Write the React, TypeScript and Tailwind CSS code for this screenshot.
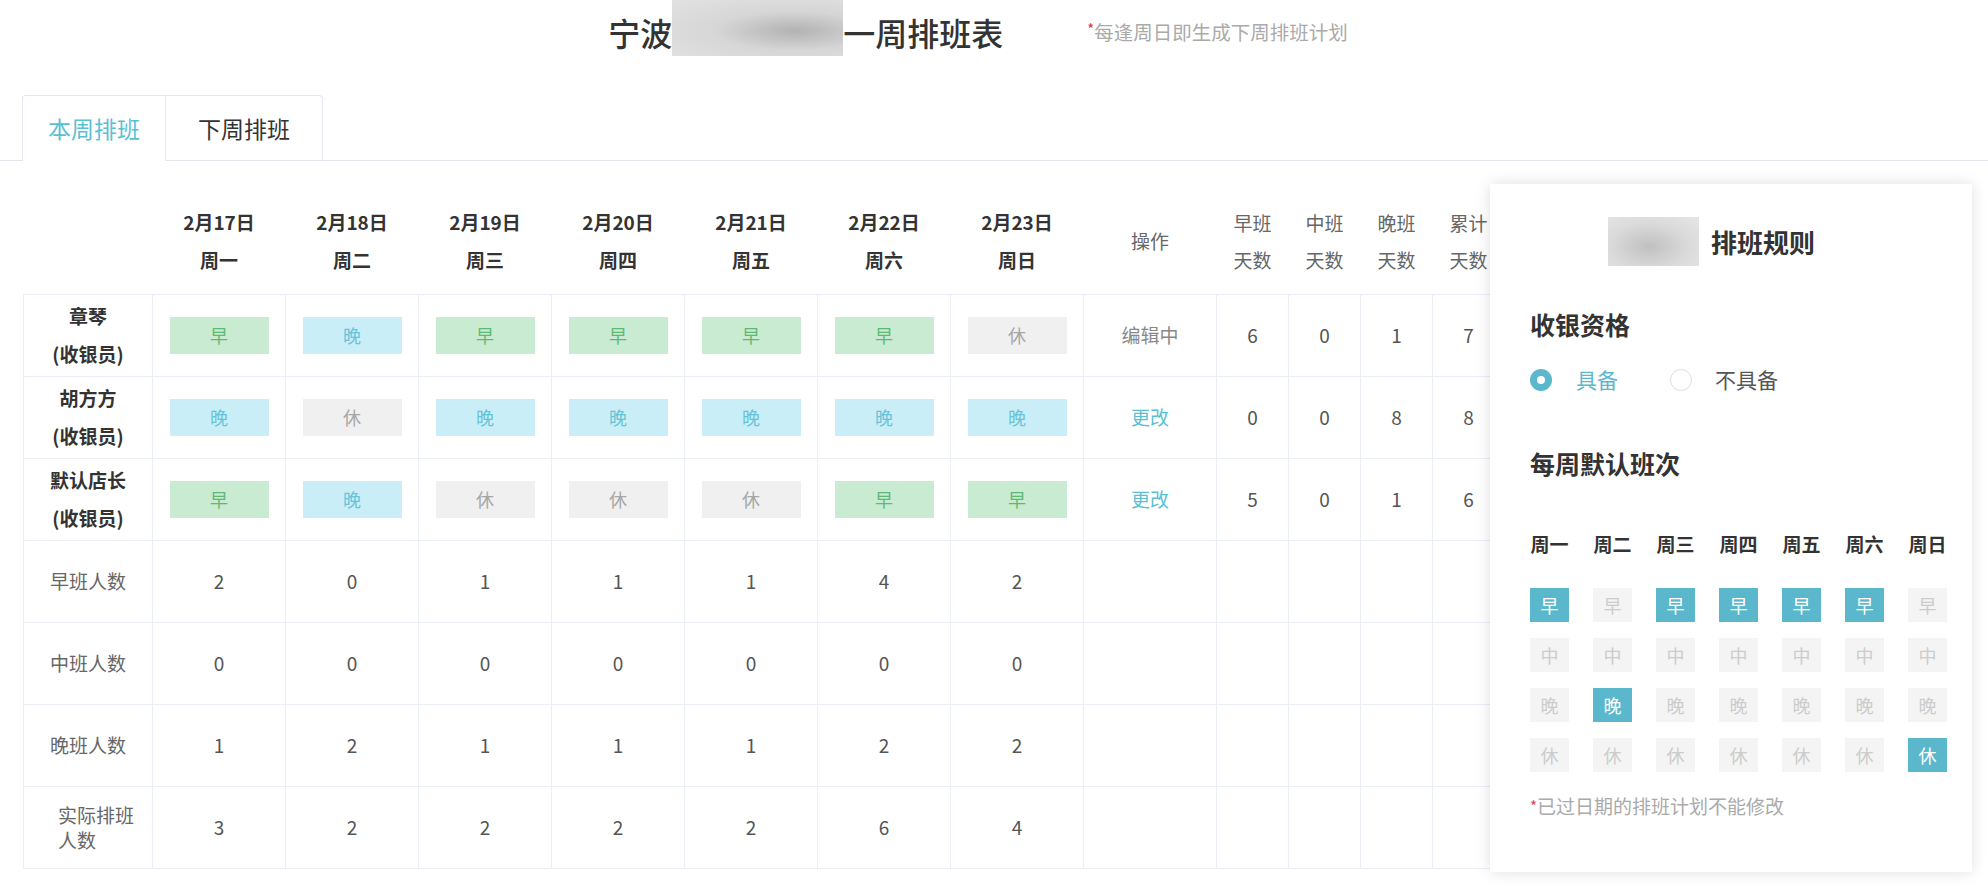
import React, { useState } from "react";

const days = [
  { date: "2月17日", week: "周一" },
  { date: "2月18日", week: "周二" },
  { date: "2月19日", week: "周三" },
  { date: "2月20日", week: "周四" },
  { date: "2月21日", week: "周五" },
  { date: "2月22日", week: "周六" },
  { date: "2月23日", week: "周日" },
];

const staff = [
  { id: 1, name: "章琴", role: "(收银员)", shifts: ["早", "晚", "早", "早", "早", "早", "休"], op: "编辑中", stats: [6, 0, 1, 7] },
  { id: 2, name: "胡方方", role: "(收银员)", shifts: ["晚", "休", "晚", "晚", "晚", "晚", "晚"], op: "更改", stats: [0, 0, 8, 8] },
  { id: 3, name: "默认店长", role: "(收银员)", shifts: ["早", "晚", "休", "休", "休", "早", "早"], op: "更改", stats: [5, 0, 1, 6] },
];

const totals = [
  { label: "早班人数", values: [2, 0, 1, 1, 1, 4, 2] },
  { label: "中班人数", values: [0, 0, 0, 0, 0, 0, 0] },
  { label: "晚班人数", values: [1, 2, 1, 1, 1, 2, 2] },
  { label: "实际排班人数", values: [3, 2, 2, 2, 2, 6, 4] },
];

const shiftStyle: Record<string, string> = {
  早: "bg-[#c8ebd2] text-[#5fb975]",
  晚: "bg-[#c9eef7] text-[#68c3d7]",
  休: "bg-[#f0f0f0] text-[#a6a6a6]",
};

const defaults = [
  { label: "早", on: [1, 0, 1, 1, 1, 1, 0] },
  { label: "中", on: [0, 0, 0, 0, 0, 0, 0] },
  { label: "晚", on: [0, 1, 0, 0, 0, 0, 0] },
  { label: "休", on: [0, 0, 0, 0, 0, 0, 1] },
];

const statHeads = ["早班", "中班", "晚班", "累计"];

function RulePanel() {
  const [cashier, setCashier] = useState(true);

  return (
    <div className="absolute top-[184px] right-[16px] w-[482px] h-[688px] bg-white shadow-[0_0_14px_rgba(0,0,0,0.13)] pl-[40px] pt-[32px]">
      <div className="flex items-center h-[50px] pl-[78px]">
        <div className="w-[91px] h-[49px] bg-[radial-gradient(ellipse_at_45%_60%,#c0c0c0,#dadada_55%,#e6e6e6)]" />
        <span className="ml-[12px] text-[26px] font-bold text-[#333]">排班规则</span>
      </div>

      <div className="mt-[41px] h-[36px] flex items-center text-[25px] font-semibold text-[#333]">收银资格</div>

      <div className="mt-[22px] h-[30px] flex items-center">
        <button className="flex items-center" onClick={() => setCashier(true)}>
          {cashier ? (
            <span className="w-[22px] h-[22px] rounded-full bg-[#5bb8cc] flex items-center justify-center">
              <span className="w-[8px] h-[8px] rounded-full bg-white" />
            </span>
          ) : (
            <span className="w-[22px] h-[22px] rounded-full border border-[#dcdfe6]" />
          )}
          <span className={`ml-[24px] text-[21px] ${cashier ? "text-[#5bb8cc]" : "text-[#555]"}`}>具备</span>
        </button>
        <button className="flex items-center ml-[52px]" onClick={() => setCashier(false)}>
          {!cashier ? (
            <span className="w-[22px] h-[22px] rounded-full bg-[#5bb8cc] flex items-center justify-center">
              <span className="w-[8px] h-[8px] rounded-full bg-white" />
            </span>
          ) : (
            <span className="w-[22px] h-[22px] rounded-full border border-[#dcdfe6]" />
          )}
          <span className={`ml-[23px] text-[21px] ${!cashier ? "text-[#5bb8cc]" : "text-[#555]"}`}>不具备</span>
        </button>
      </div>

      <div className="mt-[51px] h-[36px] flex items-center text-[25px] font-semibold text-[#333]">每周默认班次</div>

      <div className="mt-[48px] grid grid-cols-[repeat(7,39px)] gap-x-[24px] h-[26px] items-center">
        {days.map((d) => (
          <div key={d.week} className="text-[19px] font-semibold text-[#333] whitespace-nowrap flex justify-center">
            {d.week}
          </div>
        ))}
      </div>

      <div className="mt-[32px] grid grid-cols-[repeat(7,39px)] gap-x-[24px] gap-y-[16px]">
        {defaults.map((row) =>
          row.on.map((on, i) => (
            <div
              key={row.label + i}
              className={`h-[34px] flex items-center justify-center text-[18px] ${
                on ? "bg-[#5bb8cc] text-white" : "bg-[#f4f4f4] text-[#cccccc]"
              }`}
            >
              {row.label}
            </div>
          ))
        )}
      </div>

      <div className="mt-[21px] h-[26px] flex items-center text-[19px] text-[#aaa]">
        <span className="text-[#e0414f] text-[15px] self-start mt-[2px]">*</span>
        已过日期的排班计划不能修改
      </div>
    </div>
  );
}

export default function App() {
  const [tab, setTab] = useState(0);

  return (
    <div className="relative w-full h-[890px] bg-white overflow-hidden font-['Noto_Sans_CJK_SC','Noto_Sans',sans-serif] text-[#333]">
      <div className="flex justify-center h-[64px] pr-[32px]">
        <div className="flex items-center text-[32px] font-medium text-[#333]">
          <span>宁波</span>
          <div className="self-start w-[171px] h-[56px] bg-[radial-gradient(ellipse_at_72%_55%,#b2b2b2,#d6d6d6_45%,#e2e2e2)]" />
          <span>一周排班表</span>
        </div>
        <div className="flex items-center ml-[84px] text-[19.5px] text-[#aaa]">
          <span className="text-[#d9344a] text-[15px] self-center -mt-[6px]">*</span>
          每逢周日即生成下周排班计划
        </div>
      </div>

      <div className="mt-[31px] border-b border-[#e4e7ed] pl-[22px]">
        <div className="flex w-fit border border-b-0 border-[#e4e7ed] rounded-t-[4px] -mb-px">
          {["本周排班", "下周排班"].map((t, i) => (
            <button
              key={t}
              onClick={() => setTab(i)}
              className={`h-[65px] text-[23px] border-b ${i === 1 ? "border-l border-l-[#e4e7ed] w-[157px]" : "w-[142px]"} ${
                tab === i ? "text-[#5bbfd2] border-b-white" : "text-[#333] border-b-[#e4e7ed]"
              }`}
            >
              {t}
            </button>
          ))}
        </div>
      </div>

      <table className="ml-[23px] mt-[28px] table-fixed border-collapse w-[1481px] text-[19px]">
        <colgroup>
          <col className="w-[129px]" />
          {days.map((d) => (
            <col key={d.date} className="w-[133px]" />
          ))}
          <col className="w-[133px]" />
          {statHeads.map((s) => (
            <col key={s} className="w-[72px]" />
          ))}
        </colgroup>
        <thead>
          <tr className="h-[105px]">
            <th />
            {days.map((d) => (
              <th key={d.date} className="font-semibold text-[#333] leading-[38px]">
                <div>{d.date}</div>
                <div>{d.week}</div>
              </th>
            ))}
            <th className="font-normal text-[#666]">操作</th>
            {statHeads.map((s) => (
              <th key={s} className="font-normal text-[#666] leading-[37px]">
                <div>{s}</div>
                <div>天数</div>
              </th>
            ))}
          </tr>
        </thead>
        <tbody>
          {staff.map((p) => (
            <tr key={p.id} className="h-[82px]">
              <td className="border border-[#ebeef5] text-center font-semibold text-[#333] leading-[38px]">
                <div>{p.name}</div>
                <div>{p.role}</div>
              </td>
              {p.shifts.map((s, i) => (
                <td key={i} className="border border-[#ebeef5]">
                  <div className={`mx-auto w-[99px] h-[37px] flex items-center justify-center text-[18px] ${shiftStyle[s]}`}>{s}</div>
                </td>
              ))}
              <td className={`border border-[#ebeef5] text-center ${p.op === "更改" ? "text-[#5bbfd2]" : "text-[#888]"}`}>{p.op}</td>
              {p.stats.map((n, i) => (
                <td key={i} className="border border-[#ebeef5] text-center text-[#555]">
                  {n}
                </td>
              ))}
            </tr>
          ))}
          {totals.map((r) => (
            <tr key={r.label} className="h-[82px]">
              <td className="border border-[#ebeef5] text-[#666]">
                {r.label === "实际排班人数" ? (
                  <div className="ml-[34px] w-[78px] leading-[25px]">{r.label}</div>
                ) : (
                  <div className="text-center">{r.label}</div>
                )}
              </td>
              {r.values.map((v, i) => (
                <td key={i} className="border border-[#ebeef5] text-center text-[#555]">
                  {v}
                </td>
              ))}
              <td className="border border-[#ebeef5]" />
              {statHeads.map((s) => (
                <td key={s} className="border border-[#ebeef5]" />
              ))}
            </tr>
          ))}
        </tbody>
      </table>

      <RulePanel />
    </div>
  );
}
